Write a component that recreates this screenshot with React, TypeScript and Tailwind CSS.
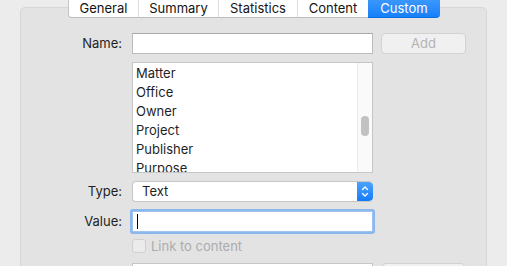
const TABS = [
  { label: 'General', w: 'w-[70px]' },
  { label: 'Summary', w: 'w-[80px]' },
  { label: 'Statistics', w: 'w-[79px]' },
  { label: 'Content', w: 'w-[71px]' },
  { label: 'Custom', w: 'w-[72px]' },
];

const ITEMS = ['Matter', 'Office', 'Owner', 'Project', 'Publisher', 'Purpose'];

function Label({ text }: { text: string }) {
  return <span className="w-[102px] shrink-0 pr-[1px] text-right text-[13px] text-[#1f1f1f]">{text}</span>;
}

export default function App() {
  return (
    <div
      className="relative h-[266px] w-[507px] overflow-hidden bg-[#ececec] px-[20px] text-[13px] text-[#222]"
      style={{ fontFamily: 'Inter, "Liberation Sans", sans-serif' }}
    >
      {/* tab strip overlaps the group box border */}
      <div className="relative z-10 flex h-[18px] pl-[48px]">
        {TABS.map((t, i) => {
          const active = t.label === 'Custom';
          return (
            <div
              key={t.label}
              className={
                active
                  ? `${t.w} flex h-[18px] items-start justify-center rounded-br-[4px] border-b border-[#0b6fe6] bg-gradient-to-b from-[#3a97fc] to-[#1580fb] pt-[1px] leading-[15px] text-white`
                  : `${t.w} flex h-[18px] items-start justify-center border-b border-[#bdbdbd] bg-white pt-[1px] leading-[15px] text-[#141414] ${
                      i === 0 ? 'rounded-bl-[4px] border-l border-l-[#c4c4c4]' : 'border-l border-l-[#dedede]'
                    }`
              }
            >
              {t.label}
            </div>
          );
        })}
      </div>

      <div className="-mt-[11px] h-[300px] rounded-[5px] border border-[#d6d6d6] bg-[#e3e3e3] pt-[25px]">
        <div className="flex items-center">
          <Label text="Name:" />
          <div className="ml-[9px] h-[21px] w-[241px] border border-[#bcbcbc] border-t-[#a9a9a9] bg-white" />
          <div className="ml-[8px] flex h-[21px] w-[85px] items-center justify-center rounded-[4px] border border-[#d2d2d2] bg-[#f0f0f0] text-[#b3b3b3]">
            Add
          </div>
        </div>

        <div className="ml-[111px] mt-[8px] flex h-[111px] w-[241px] overflow-hidden border border-[#c6c6c6] bg-white">
          <div className="flex-1 pl-[3px] pt-[1px]">
            {ITEMS.map((it) => (
              <div key={it} className="h-[19px] leading-[19px] text-[#1f1f1f]">
                {it}
              </div>
            ))}
          </div>
          <div className="w-[15px] shrink-0 border-l border-[#ebebeb] bg-[#fafafa] pl-[3px] pt-[53px]">
            <div className="h-[20px] w-[8px] rounded-full bg-[#c2c2c2]" />
          </div>
        </div>

        <div className="mt-[8px] flex items-center">
          <Label text="Type:" />
          <div className="ml-[9px] flex h-[21px] w-[241px] overflow-hidden rounded-[4px] border border-[#c6c6c6] border-r-0 bg-white">
            <span className="flex-1 pl-[9px] leading-[19px] text-[#1f1f1f]">Text</span>
            <div className="flex w-[16px] items-center justify-center rounded-r-[4px] bg-gradient-to-b from-[#4aa2fd] to-[#0f7cfb]">
              <svg width="8" height="13" viewBox="0 0 8 13" fill="none" stroke="white" strokeWidth="1.3" strokeLinecap="round" strokeLinejoin="round">
                <path d="M1.5 4.5 L4 2 L6.5 4.5" />
                <path d="M1.5 8.5 L4 11 L6.5 8.5" />
              </svg>
            </div>
          </div>
        </div>

        <div className="mt-[9px] flex items-center">
          <Label text="Value:" />
          <div className="ml-[9px] flex h-[21px] w-[241px] items-center rounded-[1px] border border-[#9fc3ee] bg-white pl-[4px] shadow-[0_0_0_2px_#8ab7ee]">
            <div className="h-[15px] w-[1px] bg-black" />
          </div>
        </div>

        <div className="ml-[111px] mt-[7px] flex items-center gap-[5px]">
          <div className="h-[14px] w-[14px] rounded-[3px] border border-[#d0d0d0] bg-[#ebebeb]" />
          <span className="leading-[14px] text-[#acacac]">Link to content</span>
        </div>

        <div className="mt-[10px] flex">
          <div className="ml-[111px] h-[21px] w-[241px] border border-[#c6c6c6] bg-white" />
          <div className="ml-[9px] h-[21px] w-[83px] rounded-[4px] border border-[#d2d2d2] bg-[#f0f0f0]" />
        </div>
      </div>
    </div>
  );
}
